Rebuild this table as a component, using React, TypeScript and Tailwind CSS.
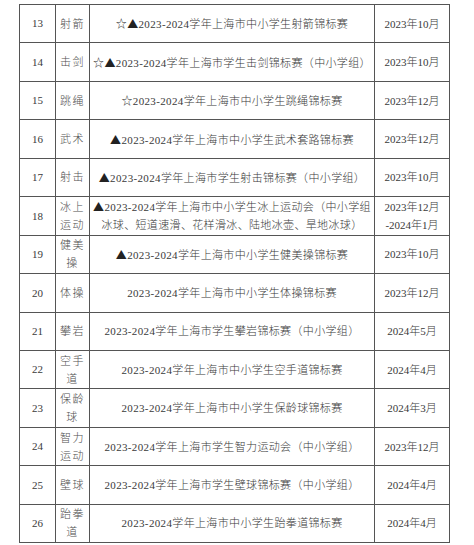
import React from 'react';

type Row = {
  no: number;
  sport: string[];
  name: string[];
  date: string[];
};

const rows: Row[] = [
  { no: 13, sport: ['射箭'], name: ['☆▲2023-2024学年上海市中小学生射箭锦标赛'], date: ['2023年10月'] },
  { no: 14, sport: ['击剑'], name: ['☆▲2023-2024学年上海市学生击剑锦标赛（中小学组）'], date: ['2023年10月'] },
  { no: 15, sport: ['跳绳'], name: ['☆2023-2024学年上海市中小学生跳绳锦标赛'], date: ['2023年12月'] },
  { no: 16, sport: ['武术'], name: ['▲2023-2024学年上海市中小学生武术套路锦标赛'], date: ['2023年12月'] },
  { no: 17, sport: ['射击'], name: ['▲2023-2024学年上海市学生射击锦标赛（中小学组）'], date: ['2023年10月'] },
  {
    no: 18,
    sport: ['冰上', '运动'],
    name: ['▲2023-2024学年上海市中小学生冰上运动会（中小学组', '冰球、短道速滑、花样滑冰、陆地冰壶、旱地冰球）'],
    date: ['2023年12月', '-2024年1月'],
  },
  { no: 19, sport: ['健美', '操'], name: ['▲2023-2024学年上海市中小学生健美操锦标赛'], date: ['2023年10月'] },
  { no: 20, sport: ['体操'], name: ['2023-2024学年上海市中小学生体操锦标赛'], date: ['2023年12月'] },
  { no: 21, sport: ['攀岩'], name: ['2023-2024学年上海市学生攀岩锦标赛（中小学组）'], date: ['2024年5月'] },
  { no: 22, sport: ['空手', '道'], name: ['2023-2024学年上海市中小学生空手道锦标赛'], date: ['2024年4月'] },
  { no: 23, sport: ['保龄', '球'], name: ['2023-2024学年上海市中小学生保龄球锦标赛'], date: ['2024年3月'] },
  { no: 24, sport: ['智力', '运动'], name: ['2023-2024学年上海市学生智力运动会（中小学组）'], date: ['2023年12月'] },
  { no: 25, sport: ['壁球'], name: ['2023-2024学年上海市学生壁球锦标赛（中小学组）'], date: ['2024年4月'] },
  { no: 26, sport: ['跆拳', '道'], name: ['2023-2024学年上海市中小学生跆拳道锦标赛'], date: ['2024年4月'] },
];

// ☆ and ▲ need the full-width CJK glyphs, not the serif ones
const withMarks = (s: string) =>
  s.split(/([☆▲])/).map((part, i) =>
    part === '☆' || part === '▲' ? (
      <span key={i} className="text-[#222]" style={{ fontFamily: '"Noto Sans CJK SC", sans-serif' }}>
        {part}
      </span>
    ) : (
      <React.Fragment key={i}>{part}</React.Fragment>
    )
  );

const Lines: React.FC<{ lines: string[] }> = ({ lines }) => (
  <>
    {lines.map((l, i) => (
      <div key={i} className="leading-[18px] whitespace-nowrap">
        {withMarks(l)}
      </div>
    ))}
  </>
);

export default function App() {
  return (
    <div className="w-[474px] h-[545px] bg-white pt-[4px] pl-[19px]">
      <table
        className="border-collapse table-fixed w-[430px] text-[#3a3a3a] text-[11px] font-light"
        style={{ fontFamily: '"Liberation Serif", "Noto Sans CJK SC", serif' }}
      >
        <colgroup>
          <col className="w-[36px]" />
          <col className="w-[34px]" />
          <col className="w-[285px]" />
          <col className="w-[75px]" />
        </colgroup>
        <tbody>
          {rows.map((r) => (
            <tr key={r.no} className="h-[38.45px]">
              <td className="border border-[#555] text-center p-0">{r.no}</td>
              <td className="border border-[#555] text-center p-0 tracking-[1.5px] text-[#505050]">
                <Lines lines={r.sport} />
              </td>
              <td className="border border-[#555] text-center p-0 tracking-[0.35px]">
                <Lines lines={r.name} />
              </td>
              <td className="border border-[#555] text-center p-0">
                <Lines lines={r.date} />
              </td>
            </tr>
          ))}
        </tbody>
      </table>
    </div>
  );
}
